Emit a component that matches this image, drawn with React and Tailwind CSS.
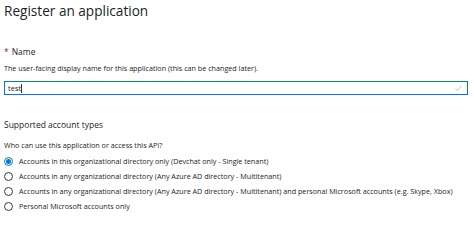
const options = [
  { label: 'Accounts in this organizational directory only (Devchat only - Single tenant)', checked: true },
  { label: 'Accounts in any organizational directory (Any Azure AD directory - Multitenant)' },
  { label: 'Accounts in any organizational directory (Any Azure AD directory - Multitenant) and personal Microsoft accounts (e.g. Skype, Xbox)' },
  { label: 'Personal Microsoft accounts only' },
];

const Radio = ({ checked }) => (
  <span
    className={`flex items-center justify-center w-[9px] h-[9px] rounded-full border shrink-0 ${
      checked ? 'border-[#0078d4]' : 'border-[#3b3a39]'
    }`}
  >
    {checked && <span className="w-[5px] h-[5px] rounded-full bg-[#0078d4]"></span>}
  </span>
);

const App = () => {
  return (
    <div
      className="w-[474px] h-[219px] bg-white text-[#252423] overflow-hidden pl-[4px] pt-[3px]"
      style={{ fontFamily: '"Open Sans", "Noto Sans", sans-serif' }}
    >
      <h1 className="text-[13.6px] leading-[16px] whitespace-nowrap text-[#201f1e]">Register an application</h1>

      <div className="mt-[27px] flex items-center text-[8.5px] leading-[12px]">
        <span className="text-[#a4262c] mr-[3px]">*</span>
        <span>Name</span>
      </div>
      <p className="mt-[5px] text-[7.2px] leading-[10px] whitespace-nowrap">
        The user-facing display name for this application (this can be changed later).
      </p>
      <div className="mt-[8px] w-[464px] h-[14px] border border-[#0078d4] flex items-center justify-between pl-[3px] pr-[5px]">
        <span className="text-[7.5px] leading-[10px] flex items-center">
          test<span className="inline-block w-px h-[9px] bg-[#323130]"></span>
        </span>
        <svg width="7" height="6" viewBox="0 0 7 6">
          <path d="M0.5 3.5 L2.5 5.2 L6.5 0.8" fill="none" stroke="#9cc49c" strokeWidth="0.8" />
        </svg>
      </div>

      <h2 className="mt-[24px] text-[8.5px] leading-[12px] whitespace-nowrap">Supported account types</h2>
      <p className="mt-[9px] text-[7.2px] leading-[10px] whitespace-nowrap">Who can use this application or access this API?</p>
      <div className="mt-[6px] flex flex-col gap-[5px]">
        {options.map((o) => (
          <label key={o.label} className="flex items-center gap-[6px] h-[10px] text-[7.2px] leading-[10px] whitespace-nowrap">
            <Radio checked={o.checked} />
            <span>{o.label}</span>
          </label>
        ))}
      </div>
    </div>
  );
};

export default App;
